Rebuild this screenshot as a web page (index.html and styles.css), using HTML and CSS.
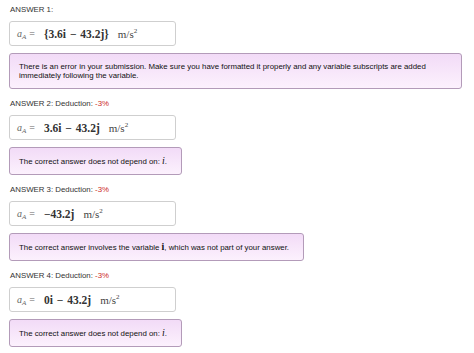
FILE: index.html
```html
<!DOCTYPE html>
<html lang="en">

<head>
    <meta charset="UTF-8">
    <meta name="viewport" content="width=device-width, initial-scale=1.0">
    <title>Answers</title>
    <link rel="stylesheet" href="styles.css">
</head>

<body>
    <div class="answer">
        <div class="label">ANSWER 1:</div>
        <div class="entry">
            <span class="var">a<sub>A</sub></span><span class="eq">=</span>
            <span class="val">{3.6i &minus; 43.2j}</span>
            <span class="unit">m/s<sup>2</sup></span>
        </div>
        <div class="feedback wide">There is an error in your submission. Make sure you have formatted it properly and any variable subscripts are added immediately following the variable.</div>
    </div>

    <div class="answer">
        <div class="label">ANSWER 2: Deduction: <span class="deduct">-3%</span></div>
        <div class="entry">
            <span class="var">a<sub>A</sub></span><span class="eq">=</span>
            <span class="val">3.6i &minus; 43.2j</span>
            <span class="unit">m/s<sup>2</sup></span>
        </div>
        <div class="feedback">The correct answer does not depend on: <span class="mi">i</span>.</div>
    </div>

    <div class="answer">
        <div class="label">ANSWER 3: Deduction: <span class="deduct">-3%</span></div>
        <div class="entry">
            <span class="var">a<sub>A</sub></span><span class="eq">=</span>
            <span class="val">&minus;43.2j</span>
            <span class="unit">m/s<sup>2</sup></span>
        </div>
        <div class="feedback">The correct answer involves the variable <span class="mb">i</span>, which was not part of your answer.</div>
    </div>

    <div class="answer">
        <div class="label">ANSWER 4: Deduction: <span class="deduct">-3%</span></div>
        <div class="entry">
            <span class="var">a<sub>A</sub></span><span class="eq">=</span>
            <span class="val">0i &minus; 43.2j</span>
            <span class="unit">m/s<sup>2</sup></span>
        </div>
        <div class="feedback">The correct answer does not depend on: <span class="mi">i</span>.</div>
    </div>
</body>

</html>
```

FILE: styles.css
```css
body {
    font-family: "Liberation Sans", Arial, sans-serif;
    font-size: 7.85px;
    color: #111;
    margin: 0;
    padding: 5px 12px 0 9px;
    background: #fff;
}

.answer {
    margin-bottom: 10px;
}

.label {
    line-height: 10px;
    margin-left: 1px;
    margin-bottom: 6px;
    color: #333;
}

.deduct {
    color: #cc2a1e;
}

.entry {
    width: 167px;
    height: 25px;
    box-sizing: border-box;
    border: 1px solid #cfcfcf;
    border-radius: 3px;
    padding: 0 7px;
    display: flex;
    align-items: center;
    font-family: "Liberation Serif", "Times New Roman", serif;
    font-size: 11.5px;
    margin-bottom: 7px;
}

.var {
    font-style: italic;
    color: #666;
    font-size: 10px;
}

.var sub {
    font-size: 7px;
    vertical-align: -2px;
    line-height: 0;
}

.eq {
    color: #666;
    font-size: 10px;
    margin-left: 3px;
    margin-right: 9px;
}

.val {
    font-weight: bold;
    color: #333;
    word-spacing: 1px;
}

.unit {
    margin-left: 9px;
    color: #444;
    font-size: 11px;
}

.unit sup {
    font-size: 7px;
    line-height: 0;
    vertical-align: 5px;
}

.feedback {
    display: inline-block;
    box-sizing: border-box;
    border: 1px solid #b39bb9;
    border-radius: 3px;
    padding: 8px 14px 8px 9px;
    line-height: 9px;
    background: linear-gradient(#f2dbf7, #fcf1fd);
    color: #111;
}

.feedback.wide {
    display: block;
    padding-right: 9px;
}

.mi {
    font-family: "Liberation Serif", "Times New Roman", serif;
    font-style: italic;
    font-size: 10px;
}

.mb {
    font-family: "Liberation Serif", "Times New Roman", serif;
    font-weight: bold;
    font-size: 10px;
}
```
